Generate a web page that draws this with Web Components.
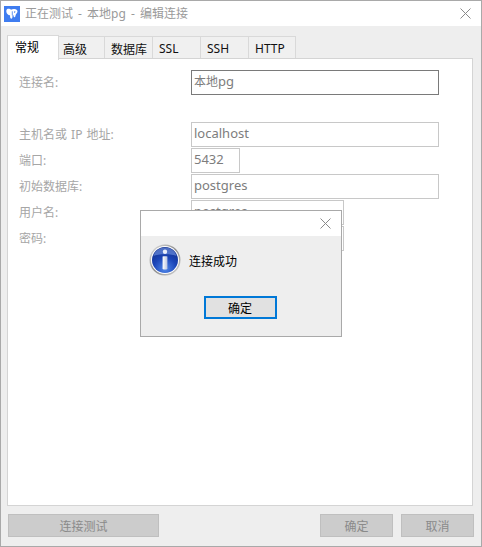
<!DOCTYPE html>
<html lang="zh-CN">
<head>
<meta charset="utf-8">
<title>编辑连接</title>
<style>
  html, body { margin: 0; padding: 0; background: #eee; }
  body { font: 12px "Noto Sans", "Noto Sans CJK SC", sans-serif; }
</style>
</head>
<body>

<edit-window>
  <win-tab slot="tabs" active>常规</win-tab>
  <win-tab slot="tabs" style="width:46px;padding-left:4px">高级</win-tab>
  <win-tab slot="tabs">数据库</win-tab>
  <win-tab slot="tabs">SSL</win-tab>
  <win-tab slot="tabs">SSH</win-tab>
  <win-tab slot="tabs" style="width:47px">HTTP</win-tab>

  <form-row label="连接名:" width="248" focused style="margin-bottom:27px"><span style="font-size:12px">本地</span>pg</form-row>
  <form-row label="主机名或 IP 地址:" width="248">localhost</form-row>
  <form-row label="端口:" width="49">5432</form-row>
  <form-row label="初始数据库:" width="248">postgres</form-row>
  <form-row label="用户名:" width="153">postgres</form-row>
  <form-row label="密码:" width="153"></form-row>

  <win-button slot="left" style="width:151px">连接测试</win-button>
  <win-button slot="right">确定</win-button>
  <win-button slot="right">取消</win-button>
</edit-window>

<msg-dialog>连接成功</msg-dialog>

<script>
const closeIcon = `<svg width="11" height="11" viewBox="0 0 11 11"><path d="M.5.5l10 10M10.500.5l-10 10" stroke="#8a8a8a" stroke-width="1" fill="none"/></svg>`;

const editWindowTemplate = document.createElement("template");
editWindowTemplate.innerHTML = `
  <style>
    :host { display: flex; flex-direction: column; box-sizing: border-box; width: 482px; height: 547px;
      border: 1px solid #a9a9a9; background: #eee; }
    .title { display: flex; align-items: center; height: 25px; flex: none; background: #fff; color: #9a9a9a;
      padding: 0 10px 0 3px; font-size: 12px; }
    .title svg.logo { margin-right: 5px; flex: none; }
    .title span { flex: 1; word-spacing: 2px; margin-bottom: 2px; }
    .tabs { display: flex; align-items: flex-end; height: 33px; flex: none; padding-left: 6px; }
    .panel { flex: none; height: 448px; margin: -1px 8px 0 6px; box-sizing: border-box; background: #fff;
      border: 1px solid #d4d4d4; padding: 11px 0 0 11px; }
    .buttons { display: flex; justify-content: space-between; padding: 8px 7px 0 7px; }
    .buttons div { display: flex; gap: 8px; }
  </style>
  <div class="title">
    <svg class="logo" width="16" height="16" viewBox="0 0 16 16">
      <rect width="16" height="16" fill="#3f7df0"/>
      <path d="M3 3.200C4.500 2.400 6.200 3 7 3.800 8 3 9.500 2.800 10.500 3c1.600.2 3 .9 3 2.300 0 1.200-.8 2.200-1.500 2.900-.4.500-.5 1.200-.6 2-.2.900-1 1.300-1.500.8-.3-.3-.3-1-.4-1.700-.5.100-.8-.1-1-.4 0 1.300 0 2.600-.4 3.400-.4.700-1.400.5-1.700-.2-.3-.7-.3-2-.4-3.200-.7.500-1.500.3-2-.5C3.200 8 2.300 6.500 2.300 5.200 2.300 4.300 2.500 3.600 3 3.200z" fill="#fff"/>
      <path d="M8.300 5.300v4M10.800 5c.2.800 0 1.500-.5 2" stroke="#3f7df0" stroke-width=".8" fill="none"/>
    </svg>
    <span>正在测试 - 本地pg - 编辑连接</span>
    ${closeIcon}
  </div>
  <div class="tabs"><slot name="tabs"></slot></div>
  <div class="panel"><slot></slot></div>
  <div class="buttons">
    <div><slot name="left"></slot></div>
    <div><slot name="right"></slot></div>
  </div>
`;

class EditWindow extends HTMLElement {
  constructor(){
    super();
    this.attachShadow({mode:"open"});
    this.shadowRoot.appendChild(editWindowTemplate.content.cloneNode(true));
  }
}

const winTabTemplate = document.createElement("template");
winTabTemplate.innerHTML = `
  <style>
    :host { display: flex; align-items: center; box-sizing: border-box; width: 48px; height: 23px; padding: 1px 0 0 6px;
      background: #f0f0f0; border: 1px solid #d9d9d9; border-left: 0; border-bottom: 0; color: #111; font-size: 12px; }
    :host([active]) { position: relative; z-index: 1; width: 52px; height: 25px; background: #fff; color: #000;
      border-left: 1px solid #d4d4d4; padding: 0 0 3px 7px; margin-bottom: -1px; }
  </style>
  <slot></slot>
`;

class WinTab extends HTMLElement {
  constructor(){
    super();
    this.attachShadow({mode:"open"});
    this.shadowRoot.appendChild(winTabTemplate.content.cloneNode(true));
  }
}

const formRowTemplate = document.createElement("template");
formRowTemplate.innerHTML = `
  <style>
    :host { display: flex; align-items: center; height: 25px; margin-bottom: 1px; color: #a6a6a6; font-size: 12px; }
    label { width: 172px; flex: none; position: relative; top: -1px; word-spacing: 1px; }
    .field { box-sizing: border-box; height: 25px; border: 1px solid #c8c8c8; padding-left: 2px;
      line-height: 21px; color: #7d7d7d; font-size: 13px; background: #fff; white-space: nowrap; overflow: hidden; }
    :host([focused]) .field { border-color: #7a7a7a; }
  </style>
  <label></label>
  <div class="field"><slot></slot></div>
`;

class FormRow extends HTMLElement {
  constructor(){
    super();
    this.attachShadow({mode:"open"});
    this.shadowRoot.appendChild(formRowTemplate.content.cloneNode(true));
  }

  connectedCallback(){
    this.shadowRoot.querySelector("label").textContent = this.getAttribute("label");
    this.shadowRoot.querySelector(".field").style.width = this.getAttribute("width") + "px";
  }
}

const winButtonTemplate = document.createElement("template");
winButtonTemplate.innerHTML = `
  <style>
    :host { display: flex; align-items: center; justify-content: center; box-sizing: border-box; width: 73px; height: 23px;
      background: #ccc; border: 1px solid #bfbfbf; color: #8a8a8a; font-size: 12px; }
  </style>
  <slot></slot>
`;

class WinButton extends HTMLElement {
  constructor(){
    super();
    this.attachShadow({mode:"open"});
    this.shadowRoot.appendChild(winButtonTemplate.content.cloneNode(true));
  }
}

const msgDialogTemplate = document.createElement("template");
msgDialogTemplate.innerHTML = `
  <style>
    :host { position: absolute; left: 140px; top: 210px; box-sizing: border-box; width: 202px; height: 127px;
      display: flex; flex-direction: column; border: 1px solid #a9a9a9; background: #eee; color: #000; font-size: 12px; }
    .title { display: flex; justify-content: flex-end; align-items: center; height: 25px; flex: none; background: #fff; padding-right: 10px; }
    .msg { display: flex; align-items: center; gap: 8px; padding: 8px 0 0 8px; height: 32px; }
    .msg svg { flex: none; }
    .msg span { position: relative; top: 1px; }
    .actions { display: flex; justify-content: center; margin-top: 20px; padding-right: 1px; }
    button { box-sizing: border-box; width: 73px; height: 23px; padding: 0 1px 0 0; background: #e1e1e1; border: 2px solid #0078d7;
      font: inherit; color: #000; }
  </style>
  <div class="title">${closeIcon}</div>
  <div class="msg">
    <svg width="32" height="32" viewBox="0 0 32 32">
      <defs>
        <linearGradient id="ring" x1="0" y1="0" x2="1" y2="1">
          <stop offset="0" stop-color="#e8e8e8"/><stop offset=".5" stop-color="#8c8c8c"/><stop offset="1" stop-color="#d8d8d8"/>
        </linearGradient>
        <radialGradient id="ball" cx=".5" cy=".85" r=".8">
          <stop offset="0" stop-color="#4f86e8"/><stop offset=".55" stop-color="#1b45b8"/><stop offset="1" stop-color="#12308c"/>
        </radialGradient>
        <linearGradient id="stem" x1="0" y1="0" x2="1" y2="0">
          <stop offset="0" stop-color="#fff"/><stop offset="1" stop-color="#b9c4e0"/>
        </linearGradient>
      </defs>
      <circle cx="16" cy="16" r="15.500" fill="url(#ring)"/>
      <circle cx="16" cy="16" r="14" fill="#fff"/>
      <circle cx="16" cy="16" r="13" fill="url(#ball)"/>
      <path d="M4.500 12C6 6.500 10.500 3.500 16 3.500S26 6.500 27.500 12C23 9.500 9 9.500 4.500 12z" fill="#7fa3ee" opacity=".55"/>
      <circle cx="16" cy="7.800" r="2.200" fill="#e9eefb"/>
      <path d="M13.600 12.500c1.500-.5 3.300-.5 4.800 0V25c-1.500.8-3.300.8-4.800 0z" fill="url(#stem)"/>
    </svg>
    <span><slot></slot></span>
  </div>
  <div class="actions"><button>确定</button></div>
`;

class MsgDialog extends HTMLElement {
  constructor(){
    super();
    this.attachShadow({mode:"open"});
    this.shadowRoot.appendChild(msgDialogTemplate.content.cloneNode(true));
  }
}

window.customElements.define("edit-window", EditWindow);
window.customElements.define("win-tab", WinTab);
window.customElements.define("form-row", FormRow);
window.customElements.define("win-button", WinButton);
window.customElements.define("msg-dialog", MsgDialog);
</script>
</body>
</html>
